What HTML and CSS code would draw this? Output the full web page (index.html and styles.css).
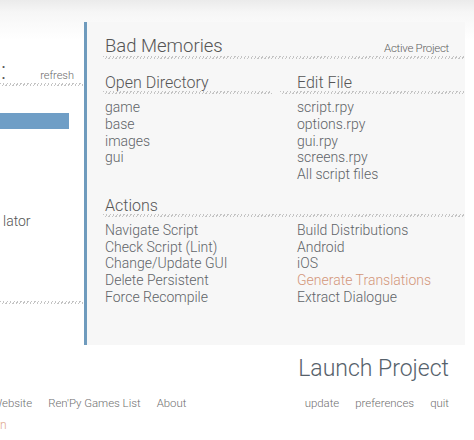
FILE: index.html
```html
<!DOCTYPE html>
<html>
<head>
<meta charset="utf-8">
<link rel="stylesheet" href="styles.css">
</head>
<body>
<div class="page">
  <div class="main">
    <div class="left">
      <div class="left-head">
        <div class="proj-title"><span>Projects:</span></div>
        <span class="refresh">refresh</span>
      </div>
      <div class="hatch"></div>
      <div class="selected"></div>
      <div class="proj-name">lator</div>
      <div class="hatch left-bottom"></div>
    </div>
    <div class="panel">
      <div class="panel-head">
        <span class="proj-name-big">Bad Memories</span>
        <span class="active">Active Project</span>
      </div>
      <div class="hatch"></div>
      <div class="cols">
        <div class="col">
          <div class="sec-title">Open Directory</div>
          <div class="hatch short"></div>
          <ul class="items">
            <li>game</li>
            <li>base</li>
            <li>images</li>
            <li>gui</li>
          </ul>
        </div>
        <div class="col">
          <div class="sec-title">Edit File</div>
          <div class="hatch right"></div>
          <ul class="items">
            <li>script.rpy</li>
            <li>options.rpy</li>
            <li>gui.rpy</li>
            <li>screens.rpy</li>
            <li>All script files</li>
          </ul>
        </div>
      </div>
      <div class="sec-title actions-title">Actions</div>
      <div class="hatch"></div>
      <div class="cols">
        <ul class="items">
          <li>Navigate Script</li>
          <li>Check Script (Lint)</li>
          <li>Change/Update GUI</li>
          <li>Delete Persistent</li>
          <li>Force Recompile</li>
        </ul>
        <ul class="items">
          <li>Build Distributions</li>
          <li>Android</li>
          <li>iOS</li>
          <li class="hot">Generate Translations</li>
          <li>Extract Dialogue</li>
        </ul>
      </div>
    </div>
  </div>
  <div class="launch">Launch Project</div>
  <div class="footer">
    <div class="links">
      <span class="clip-w">Website</span>
      <span>Ren'Py Games List</span>
      <span>About</span>
    </div>
    <div class="links">
      <span>update</span>
      <span>preferences</span>
      <span>quit</span>
    </div>
  </div>
  <div class="notice">n</div>
</div>
</body>
</html>
```
FILE: styles.css
```css
html, body {
  margin: 0;
  padding: 0;
}
body {
  width: 474px;
  height: 440px;
  overflow: hidden;
  font-family: Roboto, "Liberation Sans", sans-serif;
  font-weight: 300;
  color: #5f6468;
  background: #ffffff;
}
.page {
  width: 474px;
  height: 440px;
  overflow: hidden;
  background: linear-gradient(#ebebeb 0px, #f6f6f6 12px, #ffffff 40px);
}
.main {
  display: flex;
  padding-top: 22px;
}
.left {
  width: 83px;
  flex: 0 0 83px;
  margin-right: 1px;
}
.left-head {
  display: flex;
  justify-content: space-between;
  align-items: baseline;
  margin-top: 38px;
  padding-right: 9px;
}
.proj-title {
  width: 6px;
  display: flex;
  justify-content: flex-end;
  white-space: nowrap;
  font-size: 24px;
  line-height: 22px;
  color: #555;
}
.refresh {
  font-size: 11px;
  line-height: 14px;
  color: #6a6a6a;
}
.hatch {
  height: 3px;
  background: repeating-linear-gradient(120deg, #c4c4c4 0 1px, transparent 1px 3px);
}
.selected {
  width: 69px;
  height: 16px;
  margin-top: 27px;
  background: #6f9ec6;
}
.proj-name {
  margin-top: 84px;
  padding-left: 3px;
  font-size: 14px;
  line-height: 16.75px;
  color: #555;
}
.left-bottom {
  margin-top: 71px;
}
.panel {
  box-sizing: border-box;
  flex: 0 0 381px;
  width: 381px;
  height: 323px;
  border-left: 3px solid #6f9bbd;
  background: #f7f7f7;
  padding: 14px 0 0 16px;
}
.panel-head {
  display: flex;
  justify-content: space-between;
  align-items: baseline;
  padding: 0 16px 0 2px;
}
.proj-name-big {
  font-size: 18.5px;
  line-height: 20px;
  color: #555;
}
.active {
  font-size: 11.5px;
  line-height: 14px;
  letter-spacing: -0.3px;
  color: #5f5f5f;
}
.cols {
  display: grid;
  grid-template-columns: 192px 1fr;
}
.sec-title {
  margin-top: 15px;
  padding-left: 2px;
  font-size: 16px;
  line-height: 17px;
  color: #555;
}
.actions-title {
  margin-top: 14px;
}
.hatch.short {
  width: 169px;
}
.hatch.right {
  margin-left: -15px;
}
.items {
  list-style: none;
  margin: 5px 0 0 0;
  padding: 0 0 0 2px;
  font-size: 14px;
  line-height: 16.75px;
  color: #5f6468;
}
.items .hot {
  color: #d3967a;
}
.launch {
  margin-top: 10px;
  padding-right: 25px;
  text-align: right;
  font-size: 23px;
  line-height: 28px;
  color: #56616b;
}
.footer {
  display: flex;
  justify-content: space-between;
  margin-top: 13px;
  padding-right: 25px;
  font-size: 11.4px;
  line-height: 14px;
  color: #707070;
}
.links {
  display: flex;
  gap: 16px;
}
.clip-w {
  margin-left: -8px;
}
.notice {
  margin-top: 8px;
  font-size: 12px;
  line-height: 14px;
  color: #e0a88c;
}
```
